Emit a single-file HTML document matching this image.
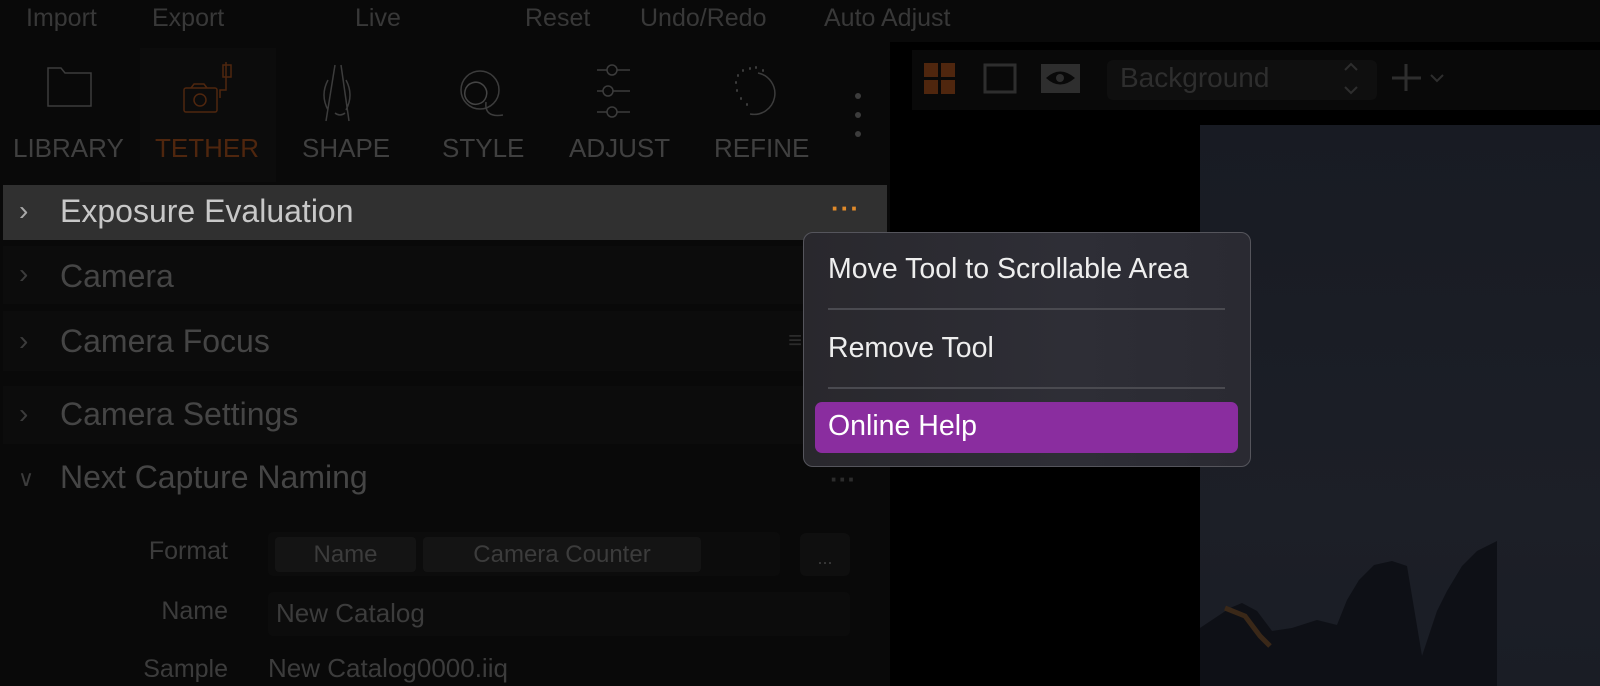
<!DOCTYPE html>
<html style="width:1600px;height:686px;overflow:hidden"><head><meta charset="utf-8"><style>
*{margin:0;padding:0;box-sizing:border-box}
body{width:1600px;height:686px;background:#000;font-family:"Liberation Sans",sans-serif;position:relative;overflow:hidden}
.a{position:absolute}
.top span{position:absolute;top:4px;font-size:25px;color:#383838}
.tab{position:absolute;top:133px;font-size:26px;color:#404040}
.row{position:absolute;left:3px;width:884px;background:#0c0c0c}
.row .t{position:absolute;left:57px;font-size:32px;color:#454545}
.row .c{position:absolute;left:16px;font-size:28px;color:#3c3c3c}
.lbl{position:absolute;font-size:25px;color:#3c3c3c;text-align:right;width:110px}
</style></head><body>
<div class="a" style="left:0;top:0;width:1600px;height:42px;background:#090909"></div>
<div class="top">
<span style="left:26px">Import</span><span style="left:152px">Export</span><span style="left:355px">Live</span><span style="left:525px">Reset</span><span style="left:640px">Undo/Redo</span><span style="left:824px">Auto Adjust</span></div>
<div class="a" style="left:0;top:42px;width:890px;height:644px;background:#090909"></div>
<div class="a" style="left:140px;top:48px;width:136px;height:134px;background:#0c0c0c"></div>
<svg class="a" style="left:0;top:40px" width="890" height="100" viewBox="0 0 890 100" fill="none" stroke="#3c3c3c" stroke-width="1.5">
<path d="M48 28h13l4 5h26v33H48z"/>
<g stroke="#4f260e"><rect x="184" y="48" width="33" height="24" rx="2"/><circle cx="200" cy="60" r="6"/><path d="M191 48l3-4h10l3 4M220 58v-8h6v-28"/><rect x="223" y="25" width="8" height="12"/></g>
<path d="M335 25l-9 56M341 25l8 56M328 40q-8 15 0 30M346 40q8 15 0 30M335 73q5 4 10 0"/>
<circle cx="480" cy="50" r="19"/><path d="M486 62q-2 16 17 13" /><path d="M483 45a11 11 0 1 0 1 1z" stroke="#444"/>
<path d="M597 30h10m10 0h13M597 51h6m10 0h17M597 72h10m10 0h13"/><circle cx="612" cy="30" r="5"/><circle cx="608" cy="51" r="5"/><circle cx="612" cy="72" r="5"/>
<path d="M758 33a20 20 0 0 1-8 41"/>
<g stroke-width="2" stroke-linecap="round"><path d="M750 28v1M743 30v1M738 35v1M736 42v1M737 50v1M741 58v1M747 64v1M756 27v1M763 30v1"/></g>
<g fill="#3c3c3c" stroke="none"><circle cx="858" cy="56" r="3"/><circle cx="858" cy="75" r="3"/><circle cx="858" cy="94" r="3"/></g>
</svg>
<span class="tab" style="left:13px">LIBRARY</span><span class="tab" style="left:155px;color:#4f260e">TETHER</span><span class="tab" style="left:302px">SHAPE</span><span class="tab" style="left:442px">STYLE</span><span class="tab" style="left:569px">ADJUST</span><span class="tab" style="left:714px">REFINE</span>
<div class="row" style="top:185px;height:55px;background:#303030"><span class="c" style="color:#aaa;top:10px">&#x203A;</span><span class="t" style="color:#c8c8c8;top:8px">Exposure Evaluation</span><span class="a" style="left:828px;top:8px;color:#e08a2a;font-size:26px;font-weight:bold;letter-spacing:1px">&middot;&middot;&middot;</span></div>
<div class="row" style="top:246px;height:58px"><span class="c" style="top:12px">&#x203A;</span><span class="t" style="top:12px">Camera</span></div>
<div class="row" style="top:311px;height:60px"><span class="c" style="top:14px">&#x203A;</span><span class="t" style="top:12px">Camera Focus</span><span class="a" style="left:785px;top:16px;color:#2c2c2c;font-size:24px">&equiv;</span></div>
<div class="row" style="top:386px;height:58px"><span class="c" style="top:12px">&#x203A;</span><span class="t" style="top:10px">Camera Settings</span></div>
<div class="a" style="left:18px;top:466px;color:#3c3c3c;font-size:22px">&#x2228;</div>
<div class="a" style="left:60px;top:459px;font-size:32px;color:#454545">Next Capture Naming</div>
<div class="a" style="left:830px;top:464px;color:#2c2c2c;font-size:26px;font-weight:bold">&middot;&middot;&middot;</div>
<div class="lbl" style="left:118px;top:537px">Format</div>
<div class="a" style="left:268px;top:532px;width:512px;height:44px;background:#0c0c0c;border-radius:5px"></div>
<div class="a" style="left:275px;top:537px;width:141px;height:35px;background:#141414;border-radius:4px;color:#3c3c3c;font-size:24px;text-align:center;line-height:36px">Name</div>
<div class="a" style="left:423px;top:537px;width:278px;height:35px;background:#141414;border-radius:4px;color:#3c3c3c;font-size:24px;text-align:center;line-height:36px">Camera Counter</div>
<div class="a" style="left:800px;top:533px;width:50px;height:43px;background:#0f0f0f;border-radius:6px;color:#3c3c3c;text-align:center;font-size:18px;line-height:50px">...</div>
<div class="lbl" style="left:118px;top:597px">Name</div>
<div class="a" style="left:268px;top:592px;width:582px;height:44px;background:#0c0c0c;border-radius:5px;color:#3c3c3c;font-size:26px;padding:6px 8px">New Catalog</div>
<div class="lbl" style="left:118px;top:655px">Sample</div>
<div class="a" style="left:268px;top:653px;color:#3c3c3c;font-size:26px;white-space:nowrap">New Catalog0000.iiq</div>
<div class="a" style="left:912px;top:50px;width:688px;height:60px;background:#090909"></div>
<svg class="a" style="left:920px;top:60px" width="540" height="40">
<g fill="#4f260e"><rect x="4" y="3" width="14" height="14"/><rect x="21" y="3" width="14" height="14"/><rect x="4" y="20" width="14" height="14"/><rect x="21" y="20" width="14" height="14"/></g>
<rect x="65" y="5" width="30" height="27" fill="none" stroke="#2e2e2e" stroke-width="3"/>
<rect x="121" y="4" width="39" height="29" fill="#2e2e2e"/><path d="M126 18q14-13 29 0q-15 13-29 0z" fill="#090909"/><circle cx="140" cy="18" r="4" fill="#2e2e2e"/>
<rect x="187" y="0" width="270" height="40" rx="6" fill="#0f0f0f"/>
<path d="M425 10l6-6 6 6M425 27l6 6 6-6" stroke="#2e2e2e" fill="none" stroke-width="2"/>
<path d="M486 4v27M472 18h29" stroke="#2e2e2e" stroke-width="3"/><path d="M511 15l6 6 6-6" stroke="#2e2e2e" fill="none" stroke-width="2"/>
</svg>
<div class="a" style="left:1120px;top:62px;font-size:28px;color:#2e2e2e">Background</div>
<div class="a" style="left:1200px;top:125px;width:400px;height:561px;background:linear-gradient(180deg,#181b23,#1c1f27 70%,#1a1d25)"></div>
<svg class="a" style="left:1200px;top:480px" width="400" height="206"><path d="M0 148l30-20 12-5 15 8 15 20 20-3 25-8 20 5 10-25 12-20 15-15 18-4 15 5 5 30 10 60 15-45 10-20 15-25 15-15 20-10v206H0z" fill="#0e1016"/><path d="M25 128l20 8 15 20 10 10" stroke="#3a2818" stroke-width="5" fill="none"/></svg>
<div class="a" style="left:803px;top:232px;width:448px;height:235px;background:linear-gradient(90deg,#29282d,#2e2e36 60%,#2a2a32);border:1px solid #55555c;border-radius:10px"></div>
<div class="a" style="left:828px;top:253px;font-size:28.5px;color:#eee;white-space:nowrap">Move Tool to Scrollable Area</div>
<div class="a" style="left:828px;top:308px;width:397px;height:2px;background:#4a4a50"></div>
<div class="a" style="left:828px;top:332px;font-size:28.5px;color:#eee">Remove Tool</div>
<div class="a" style="left:828px;top:387px;width:397px;height:2px;background:#4a4a50"></div>
<div class="a" style="left:815px;top:402px;width:423px;height:51px;background:#8a2d9f;border-radius:7px"></div>
<div class="a" style="left:828px;top:410px;font-size:28.5px;color:#fff">Online Help</div>
</body></html>
